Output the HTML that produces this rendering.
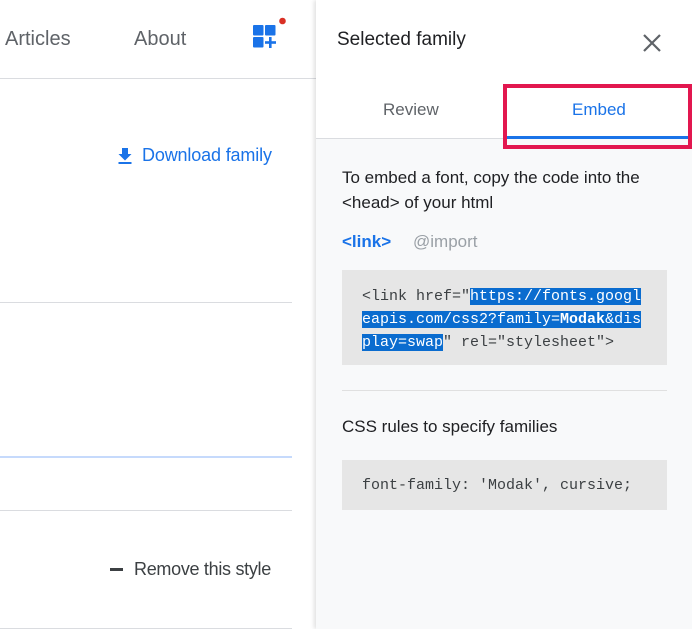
<!DOCTYPE html>
<html><head><style>
*{margin:0;padding:0;box-sizing:border-box}
body{width:692px;height:629px;overflow:hidden;background:#fff;font-family:"Liberation Sans",Arial,sans-serif;position:relative}
.a{position:absolute;white-space:nowrap}
.hl{position:absolute;left:0;width:292px;height:1px;background:#dadce0}
.mono{font-family:"Liberation Mono",monospace;font-size:15px;color:#3c4043}
.sel{background:#0a6ccf;color:#fff}
</style></head><body>
<div class="a" style="left:5px;top:28px;font-size:20px;color:#5f6368">Articles</div>
<div class="a" style="left:134px;top:28px;font-size:20px;color:#5f6368">About</div>
<svg class="a" style="left:252px;top:14px" width="36" height="36" viewBox="0 0 36 36">
<rect x="1" y="11" width="10.5" height="10.5" rx="1" fill="#1a73e8"/>
<rect x="13" y="11" width="10.5" height="10.5" rx="1" fill="#1a73e8"/>
<rect x="1" y="23" width="10.5" height="10.5" rx="1" fill="#1a73e8"/>
<rect x="17" y="23" width="2.6" height="11" fill="#1a73e8"/>
<rect x="13" y="27.2" width="11" height="2.6" fill="#1a73e8"/>
<circle cx="30.5" cy="7" r="3.3" fill="#d93025"/>
</svg>
<div class="hl" style="top:78px;width:316px"></div>
<svg class="a" style="left:117px;top:147px" width="16" height="18" viewBox="0 0 16 18">
<path d="M5 1h6v6h3.5L8 13.5 1.5 7H5z" fill="#1a73e8"/><rect x="1.5" y="15" width="13" height="2" fill="#1a73e8"/></svg>
<div class="a" style="left:142px;top:145px;font-size:18px;color:#1a73e8;letter-spacing:-0.15px">Download family</div>
<div class="hl" style="top:302px"></div>
<div class="hl" style="top:456px;height:2px;background:#c6dafc"></div>
<div class="hl" style="top:510px"></div>
<div class="a" style="left:110px;top:568px;width:13px;height:3px;background:#3c4043"></div>
<div class="a" style="left:134px;top:559px;font-size:18px;color:#3c4043;letter-spacing:-0.3px">Remove this style</div>
<div class="hl" style="top:628px"></div>

<div class="a" style="left:316px;top:0;width:376px;height:629px;background:#f8f9fa;box-shadow:-2px 0 4px rgba(0,0,0,.12)">
 <div class="a" style="left:0;top:0;width:376px;height:139px;background:#fff;border-bottom:1px solid #dadce0"></div>
 <div class="a" style="left:21px;top:29px;font-size:19px;color:#202124">Selected family</div>
 <svg class="a" style="left:326px;top:33px" width="20" height="20" viewBox="0 0 20 20"><path d="M2 2L18 18M18 2L2 18" stroke="#5f6368" stroke-width="2.2"/></svg>
 <div class="a" style="left:67px;top:100px;font-size:17px;color:#5f6368">Review</div>
 <div class="a" style="left:256px;top:100px;font-size:17px;color:#1a73e8">Embed</div>
 <div class="a" style="left:191px;top:136px;width:181px;height:3px;background:#1a73e8"></div>
 <div class="a" style="left:187px;top:84px;width:189px;height:65px;border:4px solid #e2174f"></div>
 <div class="a" style="left:26px;top:165px;font-size:17px;line-height:25px;color:#202124">To embed a font, copy the code into the<br>&lt;head&gt; of your html</div>
 <div class="a" style="left:26px;top:232px;font-size:17px;color:#1a73e8;font-weight:bold">&lt;link&gt;</div>
 <div class="a" style="left:97px;top:232px;font-size:17px;color:#9aa0a6">@import</div>
 <div class="a" style="left:26px;top:270px;width:325px;height:95px;background:#e6e6e6"></div>
 <div class="a mono" style="left:46px;top:285px;line-height:23px">&lt;link href="<span class="sel">https://fonts.googl</span><br><span class="sel">eapis.com/css2?family=<b>Modak</b>&amp;dis</span><br><span class="sel">play=swap</span>" rel="stylesheet"&gt;</div>
 <div class="a" style="left:26px;top:390px;width:325px;height:1px;background:#e0e0e0"></div>
 <div class="a" style="left:26px;top:417px;font-size:17px;color:#202124">CSS rules to specify families</div>
 <div class="a" style="left:26px;top:460px;width:325px;height:50px;background:#e6e6e6"></div>
 <div class="a mono" style="left:46px;top:477px">font-family: 'Modak', cursive;</div>
</div>
</body></html>
